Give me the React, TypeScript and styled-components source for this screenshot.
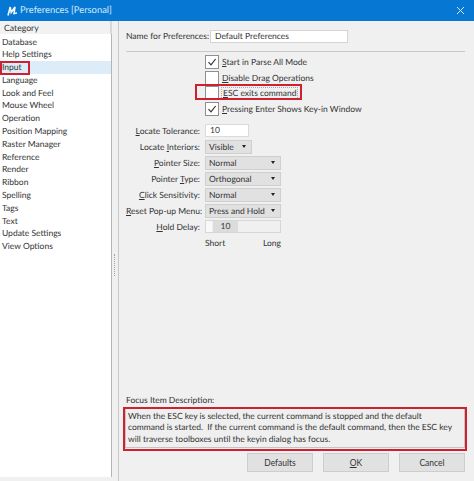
import React from 'react';
import styled, { createGlobalStyle } from 'styled-components';

const GlobalStyle = createGlobalStyle`
  html, body {
    margin: 0;
    padding: 0;
    background-color: #f0f0f0;
  }
`;

const Window = styled.div`
  position: relative;
  width: 474px;
  height: 481px;
  overflow: hidden;
  display: flex;
  flex-direction: column;
  background-color: #f0f0f0;
  color: #333;
  font-family: 'Lato', 'Open Sans', sans-serif;
  font-size: 8.5px;
  line-height: 12px;
  text-rendering: geometricPrecision;
`;

const TitleBar = styled.div`
  height: 21px;
  flex: none;
  display: flex;
  align-items: center;
  padding: 0 9px 0 7px;
  gap: 2px;
  background-color: #0678d4;
  color: #d5e8f8;
  font-size: 9.4px;
`;

const TitleText = styled.span`
  flex: 1;
`;

const Body = styled.div`
  flex: 1;
  display: flex;
  min-height: 0;
`;

const Sidebar = styled.div`
  width: 112px;
  flex: none;
  padding-bottom: 4px;
  display: flex;
  flex-direction: column;
`;

const SidebarHeader = styled.div`
  height: 13px;
  padding-left: 4px;
  background-color: #f2f2f2;
  border-right: 2px solid #d8d8d8;
  box-sizing: border-box;
  line-height: 13px;
  font-size: 8.7px;
`;

const CategoryList = styled.ul`
  flex: 1;
  list-style: none;
  margin: 0;
  padding: 1.5px 0 0;
  background-color: #fff;
  border-right: 1px solid #b5b5b5;
`;

const CategoryItem = styled.li<{ $selected?: boolean }>`
  height: 12.8px;
  line-height: 12.8px;
  padding-left: 2px;
  white-space: nowrap;
  background-color: ${props => (props.$selected ? '#dcecf8' : 'transparent')};
`;

const Splitter = styled.div`
  width: 6px;
  flex: none;
  display: flex;
  align-items: center;
  justify-content: center;
  border-right: 1px solid #c8c8c8;
`;

const Grip = styled.div`
  width: 1px;
  height: 22px;
  margin-top: 28px;
  border-left: 1px dotted #a0a0a0;
`;

const Content = styled.div`
  flex: 1;
  display: flex;
  flex-direction: column;
  padding: 8px 9px 9px 7px;
  min-width: 0;
`;

const NameRow = styled.div`
  display: flex;
  align-items: center;
  height: 14px;
`;

const NameLabel = styled.span`
  width: 84px;
  flex: none;
  white-space: nowrap;
`;

const NameInput = styled.div`
  width: 138px;
  height: 13px;
  box-sizing: border-box;
  padding-left: 4px;
  background-color: #fff;
  border: 1px solid #d4d4d4;
  line-height: 11px;
`;

const Divider = styled.div`
  height: 1px;
  margin: 8px 0 2px;
  background-color: #c8c8c8;
`;

const CheckList = styled.div`
  display: flex;
  flex-direction: column;
  padding-left: 79px;
`;

const CheckRow = styled.div`
  height: 15.7px;
  display: flex;
  align-items: center;
  gap: 3px;
`;

const CheckBox = styled.span`
  width: 12px;
  height: 12px;
  flex: none;
  display: flex;
  align-items: center;
  justify-content: center;
  background-color: #fff;
  border: 1px solid #8f8f8f;
`;

const CheckMark = () => (
  <svg width="10" height="10" viewBox="0 0 10 10">
    <path d="M1.5 5.2 L4 7.8 L8.6 2" fill="none" stroke="#333" strokeWidth="1.2" />
  </svg>
);

const FocusedLabel = styled.span`
  margin: 0 -1px;
  padding: 0 0 0 1px;
  border: 1px dotted #a8a8a8;
  line-height: 11px;
`;

const Key = styled.span`
  text-decoration: underline;
  text-underline-offset: 1px;
  text-decoration-thickness: 0.6px;
`;

const FormGrid = styled.div`
  display: grid;
  grid-template-columns: 74px 76px;
  column-gap: 5px;
  grid-auto-rows: 16px;
  align-items: center;
  margin-top: 6px;
`;

const FieldLabel = styled.label`
  text-align: right;
  white-space: nowrap;
`;

const ToleranceInput = styled.div`
  width: 44px;
  height: 13px;
  box-sizing: border-box;
  padding-left: 4px;
  background-color: #fff;
  border: 1px solid #dadada;
  line-height: 11px;
`;

const Select = styled.div<{ $short?: boolean }>`
  width: ${props => (props.$short ? '47px' : '76px')};
  height: 14px;
  box-sizing: border-box;
  padding: 0 5px 0 3px;
  display: flex;
  align-items: center;
  justify-content: space-between;
  background-color: #e1e1e1;
  border: 1px solid #cfcfcf;
  white-space: nowrap;
`;

const Caret = styled.span`
  width: 0;
  height: 0;
  border-left: 2.5px solid transparent;
  border-right: 2.5px solid transparent;
  border-top: 3px solid #222;
`;

const Slider = styled.div`
  width: 76px;
  height: 13px;
  box-sizing: border-box;
  display: flex;
  align-items: stretch;
  background-color: #f0f0f0;
  border: 1px solid #d6d6d6;
`;

const SliderThumb = styled.div`
  width: 6px;
  background-color: #f9f9f9;
`;

const SliderSpacer = styled.div`
  width: 1px;
  background-color: #ededed;
`;

const SliderValue = styled.div`
  width: 25px;
  text-align: center;
  line-height: 11px;
  background-color: #dcdcdc;
`;

const ScaleRow = styled.div`
  grid-column: 2;
  display: flex;
  justify-content: space-between;
`;

const Spacer = styled.div`
  flex: 1;
`;

const DescriptionLabel = styled.div`
  height: 12px;
  margin-bottom: 2px;
`;

const DescriptionBox = styled.div`
  height: 40px;
  box-sizing: border-box;
  margin-left: -1px;
  padding: 2px 2px;
  background-color: #efefef;
  border: 1px solid #c4c4c4;
  line-height: 11.4px;
  white-space: pre;
`;

const ButtonRow = styled.div`
  display: flex;
  justify-content: flex-end;
  gap: 10px;
  margin-top: 5px;
`;

const Button = styled.button`
  width: 66px;
  height: 19px;
  padding: 0;
  background-color: #e1e1e1;
  border: 1px solid #cdcdcd;
  color: #333;
  font: inherit;
`;

const Highlight = styled.div<{ $x: number; $y: number; $w: number; $h: number }>`
  position: absolute;
  left: ${props => props.$x}px;
  top: ${props => props.$y}px;
  width: ${props => props.$w}px;
  height: ${props => props.$h}px;
  box-sizing: border-box;
  border: 2px solid #cf2030;
  pointer-events: none;
`;

const categories = [
  'Database', 'Help Settings', 'Input', 'Language', 'Look and Feel', 'Mouse Wheel',
  'Operation', 'Position Mapping', 'Raster Manager', 'Reference', 'Render', 'Ribbon',
  'Spelling', 'Tags', 'Text', 'Update Settings', 'View Options',
];

const description = `When the ESC key is selected, the current command is stopped and the default
command is started.  If the current command is the default command, then the ESC key
will traverse toolboxes until the keyin dialog has focus.`;

export default function App() {
  return (
    <>
      <GlobalStyle />
      <Window>
        <TitleBar>
          <svg width="11" height="12" viewBox="0 0 11 12">
            <path d="M1 10.5 L3.2 2 M3.2 2 L4.2 7.5 L8 2 L7 8.5 L10 8" fill="none" stroke="#f2f7fc" strokeWidth="1.6" />
          </svg>
          <TitleText>Preferences [Personal]</TitleText>
          <svg width="9" height="9" viewBox="0 0 9 9">
            <path d="M1 1 L8 8 M8 1 L1 8" stroke="#d5e8f8" strokeWidth="1" />
          </svg>
        </TitleBar>
        <Body>
          <Sidebar>
            <SidebarHeader>Category</SidebarHeader>
            <CategoryList>
              {categories.map((name) => (
                <CategoryItem key={name} $selected={name === 'Input'}>{name}</CategoryItem>
              ))}
            </CategoryList>
          </Sidebar>
          <Splitter><Grip /></Splitter>
          <Content>
            <NameRow>
              <NameLabel>Name for Preferences:</NameLabel>
              <NameInput>Default Preferences</NameInput>
            </NameRow>
            <Divider />
            <CheckList>
              <CheckRow><CheckBox><CheckMark /></CheckBox><span><Key>S</Key>tart in Parse All Mode</span></CheckRow>
              <CheckRow><CheckBox /><span><Key>D</Key>isable Drag Operations</span></CheckRow>
              <CheckRow><CheckBox /><FocusedLabel><Key>E</Key>SC exits command</FocusedLabel></CheckRow>
              <CheckRow><CheckBox><CheckMark /></CheckBox><span><Key>P</Key>ressing Enter Shows Key-in Window</span></CheckRow>
            </CheckList>
            <FormGrid>
              <FieldLabel><Key>L</Key>ocate Tolerance:</FieldLabel>
              <ToleranceInput>10</ToleranceInput>
              <FieldLabel>Locate <Key>I</Key>nteriors:</FieldLabel>
              <Select $short>Visible<Caret /></Select>
              <FieldLabel><Key>P</Key>ointer Size:</FieldLabel>
              <Select>Normal<Caret /></Select>
              <FieldLabel>Pointer <Key>T</Key>ype:</FieldLabel>
              <Select>Orthogonal<Caret /></Select>
              <FieldLabel><Key>C</Key>lick Sensitivity:</FieldLabel>
              <Select>Normal<Caret /></Select>
              <FieldLabel><Key>R</Key>eset Pop-up Menu:</FieldLabel>
              <Select>Press and Hold<Caret /></Select>
              <FieldLabel><Key>H</Key>old Delay:</FieldLabel>
              <Slider>
                <SliderThumb />
                <SliderSpacer />
                <SliderValue>10</SliderValue>
              </Slider>
              <ScaleRow><span>Short</span><span>Long</span></ScaleRow>
            </FormGrid>
            <Spacer />
            <DescriptionLabel>Focus Item Description:</DescriptionLabel>
            <DescriptionBox>{description}</DescriptionBox>
            <ButtonRow>
              <Button>Defaults</Button>
              <Button><Key>O</Key>K</Button>
              <Button>Cancel</Button>
            </ButtonRow>
          </Content>
        </Body>
        <Highlight $x={0} $y={61} $w={30} $h={14} />
        <Highlight $x={195} $y={84} $w={107} $h={16} />
        <Highlight $x={123} $y={407} $w={344} $h={44} />
      </Window>
    </>
  );
}
